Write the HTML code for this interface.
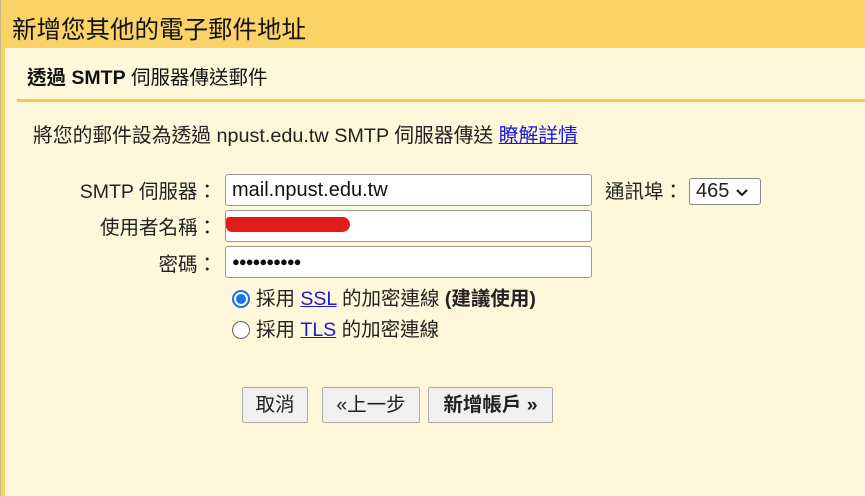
<!DOCTYPE html>
<html><head><meta charset="utf-8"><style>
*{margin:0;padding:0;box-sizing:border-box}
body{width:865px;height:496px;overflow:hidden;background:#fad266;font-family:"Liberation Sans","Noto Sans CJK TC",sans-serif;color:#222;position:relative}
.edge{position:absolute;left:0;top:0;width:1px;height:496px;background:#c9b98a}
.h1{position:absolute;left:12px;top:11px;font-size:24.5px;color:#111}
.panel{position:absolute;left:5px;top:48px;width:860px;height:448px;background:#fff7d9}
.t2{position:absolute;left:27px;top:61px;font-size:19.5px;color:#111}
.line{position:absolute;left:17px;top:99px;width:848px;height:3px;background:#f6c752}
.desc{position:absolute;left:33px;top:119px;font-size:19.8px;color:#222}
a{color:#1a1adc;text-decoration:underline}
.lbl{position:absolute;right:648px;font-size:19.5px;line-height:24px;color:#222}
.inp{position:absolute;left:225px;width:367px;height:32px;background:#fff;border:1px solid #999;border-radius:3px;font-size:20px;line-height:30px;padding-left:6px;color:#111}
.sel{position:absolute;left:689px;top:178px;width:72px;height:27px;background:#fff;border:1px solid #888;border-radius:3px;font-size:20px;line-height:25px;padding-left:6px}
.r{position:absolute;left:232px;font-size:19.5px;line-height:24px;color:#222}
.rad{display:inline-block;width:18px;height:18px;border-radius:50%;border:1px solid #666;vertical-align:-3px;margin-right:6px;background:#fff}
.rad.on{border:2px solid #1a73e8;box-shadow:inset 0 0 0 2px #fff;background:#1a73e8}
.btn{position:absolute;top:387px;height:36px;background:#f0f0f0;border:1px solid #aaa;border-radius:2px;font-size:19.5px;text-align:center;line-height:34px;color:#222}
</style></head><body>
<div class="edge"></div>
<div class="h1">新增您其他的電子郵件地址</div>
<div class="panel"></div>
<div class="t2"><b>透過 SMTP</b> 伺服器傳送郵件</div>
<div class="line"></div>
<div class="desc">將您的郵件設為透過 npust.edu.tw SMTP 伺服器傳送 <a>瞭解詳情</a></div>
<div class="lbl" style="top:180px">SMTP 伺服器：</div>
<div class="lbl" style="top:216px">使用者名稱：</div>
<div class="lbl" style="top:253px">密碼：</div>
<div class="inp" style="top:174px">mail.npust.edu.tw</div>
<div class="inp" style="top:210px"><div style="position:absolute;left:0;top:6px;width:124px;height:15px;background:#e31b1b;border-radius:4px 10px 10px 8px"></div></div>
<div class="inp" style="top:246px;font-size:13px;letter-spacing:-1px">●●●●●●●●●●</div>
<div style="position:absolute;left:605px;top:180px;font-size:19.5px;line-height:24px">通訊埠：</div>
<div class="sel">465 <svg width="12" height="10" viewBox="0 0 12 10" style="margin-left:1px"><path d="M1 3 L6 8 L11 3" fill="none" stroke="#111" stroke-width="2"/></svg></div>
<div class="r" style="top:287px"><span class="rad on"></span>採用 <a>SSL</a> 的加密連線 <b>(建議使用)</b></div>
<div class="r" style="top:318px"><span class="rad"></span>採用 <a>TLS</a> 的加密連線</div>
<div class="btn" style="left:242px;width:66px">取消</div>
<div class="btn" style="left:322px;width:98px">«上一步</div>
<div class="btn" style="left:428px;width:125px;font-weight:bold">新增帳戶 »</div>
</body></html>
